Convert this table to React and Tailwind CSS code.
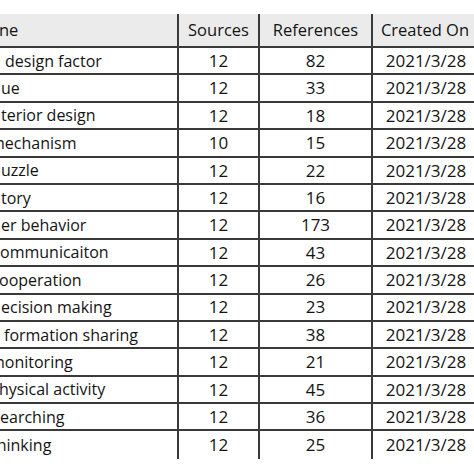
import React from 'react'

// visible part of the clipped name column, with a per-row left shift
const rows = [
  { name: "design factor", ml: "ml-[5px]", sources: 12, refs: 82 },
  { name: "ue", ml: "ml-[1px]", sources: 12, refs: 33 },
  { name: "terior design", ml: "ml-[1px]", sources: 12, refs: 18 },
  { name: "mechanism", ml: "ml-[-10px]", sources: 10, refs: 15 },
  { name: "uzzle", ml: "ml-[1px]", sources: 12, refs: 22 },
  { name: "tory", ml: "ml-[1px]", sources: 12, refs: 16 },
  { name: "er behavior", ml: "ml-[1px]", sources: 12, refs: 173 },
  { name: "ommunicaiton", ml: "ml-[0px]", sources: 12, refs: 43 },
  { name: "ooperation", ml: "ml-[-1px]", sources: 12, refs: 26 },
  { name: "ecision making", ml: "ml-[1px]", sources: 12, refs: 23 },
  { name: "formation sharing", ml: "ml-[4px]", sources: 12, refs: 38 },
  { name: "monitoring", ml: "ml-[-10px]", sources: 12, refs: 21 },
  { name: "hysical activity", ml: "ml-[-1px]", sources: 12, refs: 45 },
  { name: "earching", ml: "ml-[0px]", sources: 12, refs: 36 },
  { name: "thinking", ml: "ml-[-9px]", sources: 12, refs: 25 },
];

function App() {
  return (
    <div
      className="w-[474px] h-[474px] overflow-hidden bg-white text-[#141414] text-[16.5px] pt-[14px]"
      style={{ fontFamily: '"Open Sans", "Noto Sans", sans-serif' }}
    >
      <div className="w-[479px]">
        <div className="flex h-[34px] bg-[#ebebeb] border-b-2 border-[#3a3a3a]">
          <div className="w-[177px] overflow-hidden flex items-center whitespace-nowrap">
            <span className="ml-[-1px]">ne</span>
          </div>
          <div className="w-[81px] border-l-2 border-[#3a3a3a] flex items-center justify-center">Sources</div>
          <div className="w-[113px] border-l-2 border-[#3a3a3a] flex items-center justify-center">References</div>
          <div className="flex-1 border-l-2 border-[#3a3a3a] flex items-center justify-center pr-[2px]">Created On</div>
        </div>
        {rows.map((r, i) => (
          <div
            key={i}
            className={`flex h-[27.4px] ${i < rows.length - 1 ? "border-b-2 border-[#3a3a3a]" : ""}`}
          >
            <div className="w-[177px] overflow-hidden flex items-center whitespace-nowrap text-[16px]">
              <span className={r.ml}>{r.name}</span>
            </div>
            <div className="w-[81px] border-l-2 border-[#3a3a3a] flex items-center justify-center text-[17px]">{r.sources}</div>
            <div className="w-[113px] border-l-2 border-[#3a3a3a] flex items-center justify-center text-[17px]">{r.refs}</div>
            <div className="flex-1 border-l-2 border-[#3a3a3a] flex items-center justify-center text-[17px]">2021/3/28</div>
          </div>
        ))}
      </div>
    </div>
  )
}

export default App
